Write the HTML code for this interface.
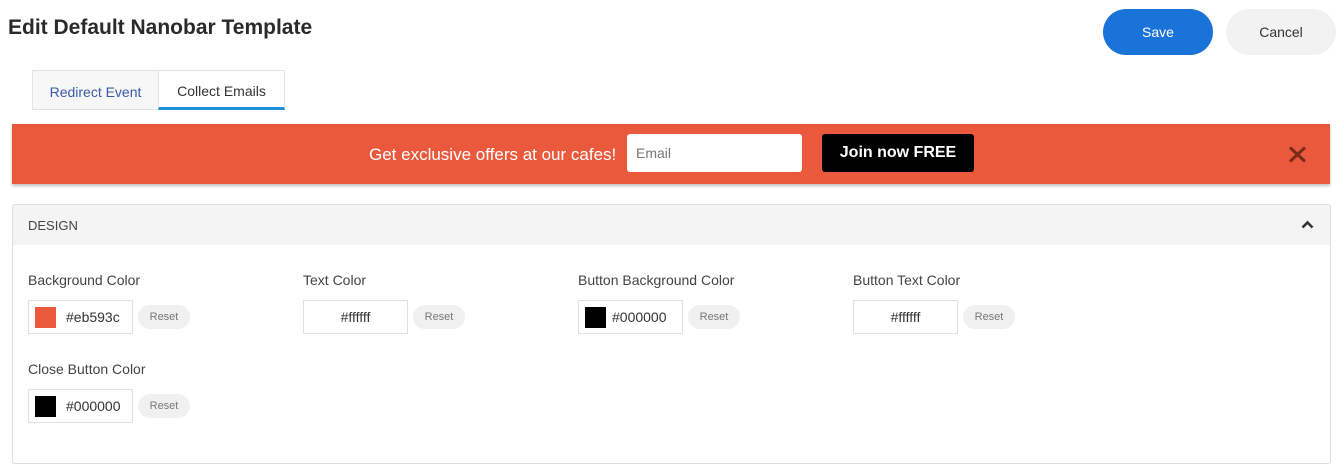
<!DOCTYPE html>
<html><head><meta charset="utf-8"><style>
*{box-sizing:border-box;margin:0;padding:0}
body{width:1344px;height:469px;background:#fff;font-family:"Liberation Sans",sans-serif;position:relative;overflow:hidden;color:#333}
.abs{position:absolute}
h1{position:absolute;left:8px;top:16px;font-size:21px;font-weight:bold;color:#2a2a2a;letter-spacing:0px}
.btn{position:absolute;border-radius:23px;font-size:14px;display:flex;align-items:center;justify-content:center}
.tab{position:absolute;top:70px;height:40px;border:1px solid #e3e3e3;font-size:14px;display:flex;align-items:center;justify-content:center;padding-top:3px}
.lbl{position:absolute;font-size:14px;color:#444}
.inp{position:absolute;width:105px;height:34px;border:1px solid #e0e0e0;font-size:14px;color:#333;display:flex;align-items:center}
.sw{width:21px;height:21px;margin:0 10px 0 6px}
.reset{position:absolute;width:52px;height:24px;border-radius:12px;background:#f0f0f0;color:#777;font-size:11px;display:flex;align-items:center;justify-content:center}
</style></head><body>
<h1>Edit Default Nanobar Template</h1>
<div class="btn" style="left:1103px;top:9px;width:110px;height:46px;background:#1a73d9;color:#fff">Save</div>
<div class="btn" style="left:1226px;top:9px;width:110px;height:46px;background:#f2f2f2;color:#333">Cancel</div>
<div class="tab" style="left:32px;width:127px;background:#f7f7f7;color:#3a5aa8">Redirect Event</div>
<div class="tab" style="left:158px;width:127px;background:#fff;color:#333;border-bottom:3px solid #1e8fd8">Collect Emails</div>

<div class="abs" style="left:12px;top:124px;width:1318px;height:60px;background:#eb593c;box-shadow:0 2px 3px rgba(0,0,0,.25)"></div>
<div class="abs" style="left:369px;top:145px;font-size:17px;color:#fff">Get exclusive offers at our cafes!</div>
<div class="abs" style="left:627px;top:134px;width:175px;height:38px;background:#fff;border-radius:3px;font-size:14px;color:#777;padding:11px 0 0 9px">Email</div>
<div class="abs" style="left:822px;top:134px;width:152px;height:38px;background:#000;border-radius:3px;color:#fff;font-size:16px;font-weight:bold;display:flex;align-items:center;justify-content:center">Join now FREE</div>
<svg class="abs" style="left:1288px;top:146px" width="19" height="17" viewBox="0 0 19 17"><path d="M2 1.5L17 15.5M17 1.5L2 15.5" stroke="#7a2a1a" stroke-width="3"/></svg>

<div class="abs" style="left:12px;top:204px;width:1319px;height:260px;border:1px solid #ddd;border-radius:3px"></div>
<div class="abs" style="left:13px;top:205px;width:1317px;height:40px;background:#f4f4f4"></div>
<div class="abs" style="left:28px;top:218px;font-size:13px;color:#444">DESIGN</div>
<svg class="abs" style="left:1301px;top:220px" width="13" height="9" viewBox="0 0 13 9"><path d="M1.5 7.5L6.5 2.5L11.5 7.5" stroke="#333" stroke-width="2.6" fill="none"/></svg>

<div class="lbl" style="left:28px;top:272px">Background Color</div>
<div class="inp" style="left:28px;top:300px"><div class="sw" style="background:#eb593c"></div>#eb593c</div>
<div class="reset" style="left:138px;top:305px">Reset</div>

<div class="lbl" style="left:303px;top:272px">Text Color</div>
<div class="inp" style="left:303px;top:300px;justify-content:center">#ffffff</div>
<div class="reset" style="left:413px;top:305px">Reset</div>

<div class="lbl" style="left:578px;top:272px">Button Background Color</div>
<div class="inp" style="left:578px;top:300px"><div class="sw" style="background:#000;margin-right:6px"></div>#000000</div>
<div class="reset" style="left:688px;top:305px">Reset</div>

<div class="lbl" style="left:853px;top:272px">Button Text Color</div>
<div class="inp" style="left:853px;top:300px;justify-content:center">#ffffff</div>
<div class="reset" style="left:963px;top:305px">Reset</div>

<div class="lbl" style="left:28px;top:361px">Close Button Color</div>
<div class="inp" style="left:28px;top:389px"><div class="sw" style="background:#000"></div>#000000</div>
<div class="reset" style="left:138px;top:394px">Reset</div>
</body></html>
